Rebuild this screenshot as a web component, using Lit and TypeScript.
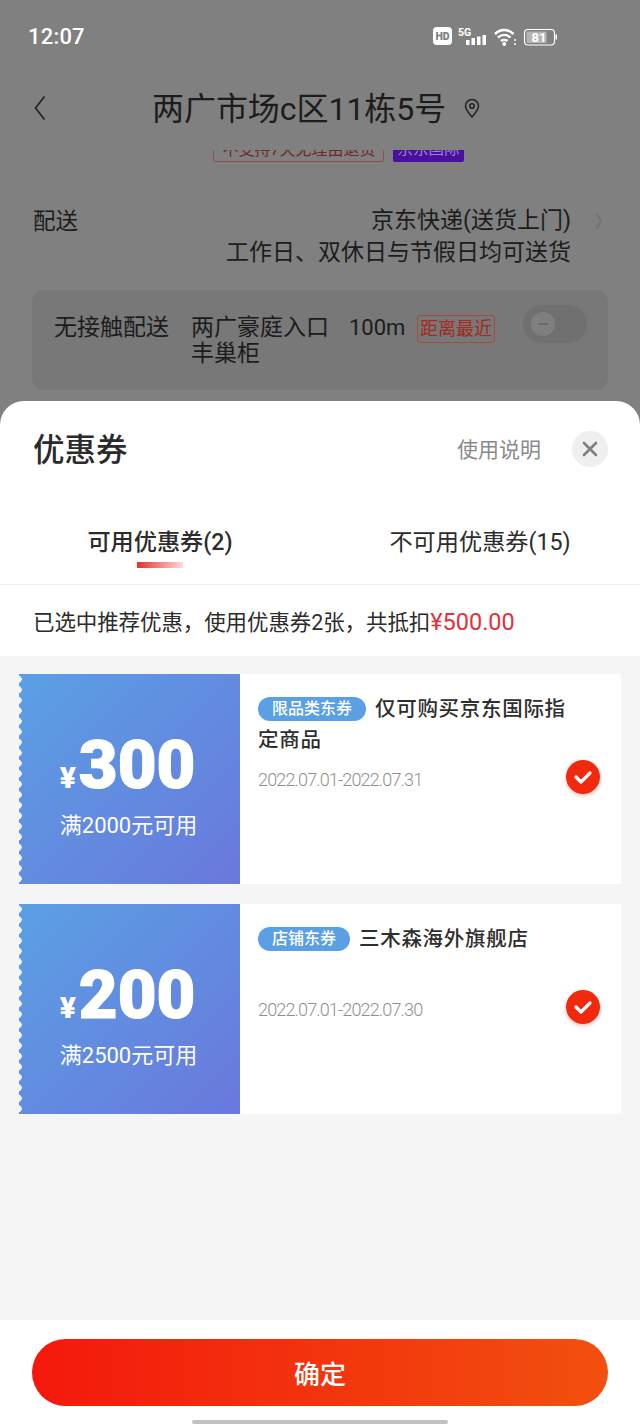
import { LitElement, html, css } from 'lit';
import { customElement } from 'lit/decorators.js';

type Coupon = {
  amount: string
  limit: string
  tag: string
  title: string
  date: string
}

const coupons: Coupon[] = [
  { amount: '300', limit: '满2000元可用', tag: '限品类东券', title: '仅可购买京东国际指定商品', date: '2022.07.01-2022.07.31' },
  { amount: '200', limit: '满2500元可用', tag: '店铺东券', title: '三木森海外旗舰店', date: '2022.07.01-2022.07.30' },
];

@customElement('app-root')
export class AppRoot extends LitElement {
  static styles = css`
    :host {
      display: block;
      width: 640px;
      height: 1426px;
      overflow: hidden;
      background: #808080;
      font-family: "Roboto", "Noto Sans CJK SC", sans-serif;
      color: #333;
    }
    :host * { box-sizing: border-box; }

    /* dimmed page behind the sheet */
    .page { height: 401px; color: #1c1c1c; }
    .status {
      height: 72px;
      padding: 0 81px 0 28px;
      display: flex;
      align-items: center;
      justify-content: space-between;
      color: #fff;
    }
    .time { font-size: 22px; font-weight: 500; letter-spacing: 0.2px; }
    .status-icons { display: flex; align-items: center; }
    .nav {
      height: 72px;
      padding: 0 0 0 33px;
      display: flex;
      align-items: center;
    }
    .nav-title { margin: -4px 0 0 105px; font-size: 32px; white-space: nowrap; letter-spacing: -0.05px; }
    .pin { margin-left: 17px; }
    .tags {
      height: 12px;
      margin-top: 6px;
      display: flex;
      justify-content: center;
      align-items: flex-end;
      overflow: hidden;
      gap: 9px;
      padding-left: 37px;
    }
    .tag-a {
      height: 26px;
      padding: 0 8px;
      font-size: 16px;
      line-height: 25px;
      color: #6e2a2a;
      border: 1px solid #8c5050;
      border-radius: 2px;
    }
    .tag-b {
      height: 26px;
      padding: 0 4px;
      font-size: 15.5px;
      line-height: 27px;
      color: #9a86c4;
      background: #4a0f9e;
      border-radius: 2px;
    }
    .delivery {
      margin-top: 43px;
      padding: 0 32px 0 33px;
      display: flex;
      justify-content: space-between;
      font-size: 22.5px;
    }
    .delivery-right { text-align: right; line-height: 32px; font-size: 23px; }
    .delivery-label { line-height: 32px; }
    .chev { margin: 6px 0 0 23px; }
    .delivery-main { display: flex; margin-right: 4px; }
    .contact {
      margin: 21px 32px 0;
      height: 100px;
      border-radius: 12px;
      background: #787878;
      padding: 25px 21px 0 22px;
      display: flex;
      font-size: 23px;
      line-height: 26px;
    }
    .contact-name { width: 137px; flex: none; }
    .contact-addr { width: 158px; flex: none; }
    .contact-dist { width: 68px; flex: none; font-size: 22px; }
    .contact-badge {
      height: 28px;
      padding: 0 2px;
      font-size: 18px;
      line-height: 26px;
      color: #a5291f;
      border: 1px solid #a8483e;
      border-radius: 3px;
    }
    .switch {
      margin: -10px 0 0 auto;
      width: 64px;
      height: 38px;
      border-radius: 19px;
      background: #707070;
      padding: 7px 8px;
    }
    .knob {
      width: 24px;
      height: 24px;
      border-radius: 50%;
      background: #7f7f7f;
      display: flex;
      align-items: center;
      justify-content: center;
    }
    .knob i { display: block; width: 10px; height: 2px; background: #6b6b6b; }

    /* coupon sheet */
    .sheet {
      height: 1025px;
      background: #fff;
      border-radius: 24px 24px 0 0;
      display: flex;
      flex-direction: column;
    }
    .head {
      height: 104px;
      padding: 30px 32px 0 33px;
      display: flex;
      align-items: flex-start;
    }
    .head h1 { margin: 0; font-size: 31.5px; line-height: 40px; font-weight: 500; color: #2b2b2b; }
    .help { margin: 6px 31px 0 auto; font-size: 21px; line-height: 26px; color: #8a8a8a; }
    .close {
      width: 36px;
      height: 36px;
      border-radius: 50%;
      background: #efefef;
      display: flex;
      align-items: center;
      justify-content: center;
    }
    .tabs {
      height: 80px;
      border-bottom: 1px solid #eeeeee;
      display: flex;
      font-size: 23.2px;
      line-height: 32px;
      color: #2c2c2c;
    }
    .tab { width: 320px; padding-top: 21px; display: flex; flex-direction: column; align-items: center; }
    .tab.on { font-weight: 500; }
    .bar {
      width: 46px;
      height: 6px;
      margin-top: 4px;
      background: linear-gradient(90deg, #e6302a, #fbdcd8);
    }
    .summary {
      height: 71px;
      padding: 0 0 0 33px;
      display: flex;
      align-items: center;
      font-size: 21.5px;
      color: #2c2c2c;
      letter-spacing: -0.1px;
    }
    .summary b { font-weight: 400; font-size: 23.5px; color: #e2313b; letter-spacing: 0; margin-top: 2px; }

    .list {
      flex: 1;
      background: #f5f5f5;
      padding: 18px 19px 0;
      display: flex;
      flex-direction: column;
      gap: 20px;
    }
    .footer {
      height: 106px;
      padding: 19px 32px 0;
      display: flex;
      flex-direction: column;
      align-items: center;
    }
    .ok {
      width: 100%;
      height: 67px;
      border-radius: 34px;
      background: linear-gradient(90deg, #f4180c, #f2500f);
      color: #fff;
      font-size: 26px;
      font-weight: 500;
      display: flex;
      align-items: center;
      justify-content: center;
    }
    .home { margin-top: 14px; width: 256px; height: 4px; border-radius: 2px; background: #c2c2c2; }
  `;

  renderStatusIcons() {
    return html`
      <div class="status-icons">
        <svg width="126" height="24" viewBox="0 0 126 24">
          <rect x="0" y="3" width="19" height="18" rx="4" fill="#fff"/>
          <text x="9.500" y="16" text-anchor="middle" font-size="10.500" font-weight="900" fill="#808080" font-family="Roboto">HD</text>
          <text x="25" y="12" font-size="10.500" font-weight="700" fill="#fff" font-family="Roboto">5G</text>
          <rect x="33" y="16" width="3.500" height="5" fill="#fff"/>
          <rect x="38.500" y="14" width="3.500" height="7" fill="#fff"/>
          <rect x="44" y="12.500" width="3.500" height="8.500" fill="#fff"/>
          <rect x="49.500" y="11" width="3.500" height="10" fill="#fff"/>
          <path d="M62 10c5.500-5.500 13-5.500 18.500 0M65 13.500c3.800-3.500 8.700-3.500 12.500 0M68 17c1.800-1.500 4.700-1.500 6.500 0" fill="none" stroke="#fff" stroke-width="2.500"/>
          <circle cx="71.250" cy="20" r="1.900" fill="#fff"/>
          <circle cx="82" cy="16" r="1" fill="#fff"/>
          <circle cx="82" cy="20" r="1" fill="#fff"/>
          <rect x="91.500" y="5.500" width="30" height="15.500" rx="3.500" fill="none" stroke="#fff" stroke-width="1.200"/>
          <rect x="93.500" y="7.500" width="20" height="11.500" rx="1" fill="#b5b5b5"/>
          <rect x="122.500" y="10.500" width="1.500" height="5" fill="#fff"/>
          <text x="106" y="18" text-anchor="middle" font-size="13" font-weight="700" fill="#fff" font-family="Roboto">81</text>
        </svg>
      </div>
    `;
  }

  renderPage() {
    return html`
      <div class="page">
        <div class="status">
          <span class="time">12:07</span>
          ${this.renderStatusIcons()}
        </div>
        <div class="nav">
          <svg width="14" height="28" viewBox="0 0 14 28"><path d="M11.500 2.500 2.500 14l9 11.500" fill="none" stroke="#222" stroke-width="1.700"/></svg>
          <span class="nav-title">两广市场c区11栋5号</span>
          <svg class="pin" width="18" height="22" viewBox="0 0 18 22">
            <path d="M9 20C5 15.500 2.500 12.500 2.500 9a6.500 6.500 0 0 1 13 0C15.500 12.500 13 15.500 9 20Z" fill="none" stroke="#222" stroke-width="1.500"/>
            <circle cx="9" cy="9" r="2.200" fill="none" stroke="#222" stroke-width="1.500"/>
          </svg>
        </div>
        <div class="tags">
          <span class="tag-a">不支持7天无理由退货</span>
          <span class="tag-b">京东国际</span>
        </div>
        <div class="delivery">
          <span class="delivery-label">配送</span>
          <div class="delivery-main">
            <div class="delivery-right">
              <div>京东快递(送货上门)</div>
              <div>工作日、双休日与节假日均可送货</div>
            </div>
            <svg class="chev" width="10" height="20" viewBox="0 0 10 20"><path d="M2 2l5 8-5 8" fill="none" stroke="#717171" stroke-width="1.600"/></svg>
          </div>
        </div>
        <div class="contact">
          <span class="contact-name">无接触配送</span>
          <span class="contact-addr">两广豪庭入口 丰巢柜</span>
          <span class="contact-dist">100m</span>
          <span class="contact-badge">距离最近</span>
          <div class="switch"><div class="knob"><i></i></div></div>
        </div>
      </div>
    `;
  }

  render() {
    return html`
      ${this.renderPage()}
      <div class="sheet">
        <div class="head">
          <h1>优惠券</h1>
          <span class="help">使用说明</span>
          <div class="close">
            <svg width="16" height="16" viewBox="0 0 16 16"><path d="M2 2l12 12M14 2 2 14" stroke="#7f7f7f" stroke-width="2.600" stroke-linecap="round"/></svg>
          </div>
        </div>
        <div class="tabs">
          <div class="tab on">可用优惠券(2)<div class="bar"></div></div>
          <div class="tab">不可用优惠券(15)</div>
        </div>
        <div class="summary">已选中推荐优惠，使用优惠券2张，共抵扣<b>¥500.00</b></div>
        <div class="list">
          ${coupons.map(c => html`<coupon-card .coupon=${c}></coupon-card>`)}
        </div>
        <div class="footer">
          <div class="ok">确定</div>
          <div class="home"></div>
        </div>
      </div>
    `;
  }
}

@customElement('coupon-card')
export class CouponCard extends LitElement {
  static properties = { coupon: { type: Object } };
  coupon!: Coupon;

  static styles = css`
    :host {
      display: flex;
      height: 210px;
      background: #fff;
      font-family: "Roboto", "Noto Sans CJK SC", sans-serif;
    }
    :host * { box-sizing: border-box; }
    .left {
      position: relative;
      width: 221px;
      flex: none;
      background: linear-gradient(135deg, #5aa0e4, #6a78dc);
      color: #fff;
      display: flex;
      flex-direction: column;
      align-items: center;
      padding: 52px 4px 0 0;
    }
    /* scalloped edge, sits on top of the gradient */
    .left::before {
      content: "";
      position: absolute;
      left: 0;
      top: 0;
      bottom: 0;
      width: 3px;
      background: radial-gradient(circle at -1px 50%, #f5f5f5 3.5px, transparent 4px) 0 0 / 3px 10.5px repeat-y;
    }
    .price { display: flex; align-items: baseline; height: 78px; }
    .yen { font-size: 30px; font-weight: 900; margin-right: 3px; }
    .amount { font-size: 67px; line-height: 78px; font-weight: 900; -webkit-text-stroke: 1.2px #fff; }
    .limit { margin: 7px 0 0 2px; font-size: 22px; line-height: 30px; }
    .right { position: relative; flex: 1; padding: 20px 40px 0 18px; }
    .title { height: 62px; font-size: 20.5px; line-height: 31px; font-weight: 500; color: #2e2e2e; letter-spacing: 0.7px; }
    .tag {
      display: inline-block;
      height: 24px;
      padding: 0 14px;
      margin-right: 9px;
      border-radius: 12px;
      background: #5aa0e2;
      color: #fff;
      font-size: 16px;
      font-weight: 500;
      line-height: 24px;
      vertical-align: 2px;
      letter-spacing: 0;
    }
    .date { margin-top: 12px; font-size: 18px; font-weight: 300; line-height: 24px; color: #8f8f8f; letter-spacing: -0.85px; }
    .check {
      position: absolute;
      right: 21px;
      top: 86px;
      width: 34px;
      height: 34px;
      border-radius: 50%;
      background: #f0290f;
      box-shadow: 0 2px 4px rgba(240, 60, 30, 0.3);
      display: flex;
      align-items: center;
      justify-content: center;
    }
  `;

  render() {
    const c = this.coupon;
    return html`
      <div class="left">
        <div class="price"><span class="yen">¥</span><span class="amount">${c.amount}</span></div>
        <div class="limit">${c.limit}</div>
      </div>
      <div class="right">
        <div class="title"><span class="tag">${c.tag}</span>${c.title}</div>
        <div class="date">${c.date}</div>
        <div class="check">
          <svg width="20" height="16" viewBox="0 0 20 16"><path d="M3 8l5 5 9-9" fill="none" stroke="#fff" stroke-width="3.200" stroke-linecap="round" stroke-linejoin="round"/></svg>
        </div>
      </div>
    `;
  }
}
